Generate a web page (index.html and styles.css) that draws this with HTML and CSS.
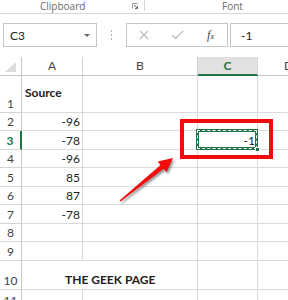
FILE: index.html
```html
<!DOCTYPE html>
<html lang="en">
  <head>
    <meta charset="UTF-8" />
    <title>Excel copy</title>
    <link rel="stylesheet" href="styles.css" />
  </head>
  <body>
    <div class="sheet">
      <div class="ribbon">
        <div class="group clip">
          <span class="label">Clipboard</span>
          <svg class="launcher" width="6" height="6" viewBox="0 0 6 6">
            <path d="M0.5 5.5V0.5H5.5" fill="none" stroke="#9a9a9a" stroke-width="1" />
            <path d="M2 2L5.5 5.5M3 5.5H5.5V3" fill="none" stroke="#6a6a6a" stroke-width="1" />
          </svg>
        </div>
        <div class="group font">
          <span class="label">Font</span>
        </div>
      </div>

      <div class="fbar">
        <div class="namebox">
          <span>C3</span>
          <span class="caret"></span>
        </div>
        <div class="grip"><i></i><i></i><i></i></div>
        <div class="fbtns">
          <svg width="10" height="10" viewBox="0 0 10 10" class="icon-x">
            <path d="M1 1L9 9M9 1L1 9" stroke="#bdbdbd" stroke-width="1.2" fill="none" />
          </svg>
          <svg width="13" height="10" viewBox="0 0 13 10" class="icon-check">
            <path d="M1 5L4.5 8.5L12 1" stroke="#bdbdbd" stroke-width="1.3" fill="none" />
          </svg>
          <span class="fx">f<small>x</small></span>
        </div>
        <div class="finput">-1</div>
      </div>

      <div class="grid">
        <div class="row head">
          <div class="cell rh corner"><span class="tri"></span></div>
          <div class="cell ch">A</div>
          <div class="cell ch">B</div>
          <div class="cell ch sel">C</div>
          <div class="cell ch">D</div>
        </div>
        <div class="row r1">
          <div class="cell rh">1</div>
          <div class="cell mid bold">Source</div>
          <div class="cell"></div>
          <div class="cell"></div>
          <div class="cell"></div>
        </div>
        <div class="row h18">
          <div class="cell rh">2</div>
          <div class="cell num">-96</div>
          <div class="cell"></div>
          <div class="cell"></div>
          <div class="cell"></div>
        </div>
        <div class="row h19">
          <div class="cell rh sel">3</div>
          <div class="cell num">-78</div>
          <div class="cell"></div>
          <div class="cell num active">-1<span class="handle"></span></div>
          <div class="cell"></div>
        </div>
        <div class="row h18">
          <div class="cell rh">4</div>
          <div class="cell num">-96</div>
          <div class="cell"></div>
          <div class="cell"></div>
          <div class="cell"></div>
        </div>
        <div class="row h19">
          <div class="cell rh">5</div>
          <div class="cell num">85</div>
          <div class="cell"></div>
          <div class="cell"></div>
          <div class="cell"></div>
        </div>
        <div class="row h18">
          <div class="cell rh">6</div>
          <div class="cell num">87</div>
          <div class="cell"></div>
          <div class="cell"></div>
          <div class="cell"></div>
        </div>
        <div class="row h19">
          <div class="cell rh">7</div>
          <div class="cell num">-78</div>
          <div class="cell"></div>
          <div class="cell"></div>
          <div class="cell"></div>
        </div>
        <div class="row h18">
          <div class="cell rh">8</div>
          <div class="cell"></div>
          <div class="cell"></div>
          <div class="cell"></div>
          <div class="cell"></div>
        </div>
        <div class="row h19">
          <div class="cell rh">9</div>
          <div class="cell"></div>
          <div class="cell"></div>
          <div class="cell"></div>
          <div class="cell"></div>
        </div>
        <div class="row r10">
          <div class="cell rh">10</div>
          <div class="cell span2 bold title">THE GEEK PAGE</div>
          <div class="cell"></div>
          <div class="cell"></div>
        </div>
        <div class="row r11">
          <div class="cell rh">11</div>
          <div class="cell"></div>
          <div class="cell"></div>
          <div class="cell"></div>
          <div class="cell"></div>
        </div>
      </div>

      <div class="callout"></div>
      <svg class="arrow" width="288" height="300" viewBox="0 0 288 300">
        <defs>
          <filter id="shadow" x="-20%" y="-20%" width="140%" height="140%">
            <feGaussianBlur stdDeviation="1.2" />
          </filter>
        </defs>
        <polygon
          points="119.5,200.5 160.5,164.9 157.7,161.4 173,158 166.5,172.2 163.7,168.7 120.5,201.5"
          fill="#555"
          opacity="0.6"
          filter="url(#shadow)"
          transform="translate(1.5 2)"
        />
        <polygon
          points="119.5,200.5 160.5,164.9 157.7,161.4 173,158 166.5,172.2 163.7,168.7 120.5,201.5"
          fill="#f20d0d"
        />
      </svg>
    </div>
  </body>
</html>
```

FILE: styles.css
```css
* {
  margin: 0;
  padding: 0;
  box-sizing: border-box;
}

body {
  background-color: #fff;
  overflow: hidden;
  font-family: Lato, "Liberation Sans", sans-serif;
  color: #222;
}

.sheet {
  position: relative;
  width: 288px;
  height: 300px;
  overflow: hidden;
}

/* ribbon labels */
.ribbon {
  display: flex;
  height: 14px;
  border-bottom: 1px solid #d6d6d6;
}

.group {
  position: relative;
  display: flex;
  align-items: flex-start;
}

.group .label {
  font-family: "Open Sans", sans-serif;
  font-size: 10px;
  line-height: 12px;
  color: #6b6b6b;
}

.clip {
  width: 145px;
  padding-left: 40px;
}

.clip::after {
  content: "";
  position: absolute;
  right: 0;
  top: 0;
  width: 1px;
  height: 11px;
  background-color: #d6d6d6;
}

.launcher {
  margin-left: 47px;
  margin-top: 3px;
}

.font {
  padding-left: 77px;
}

/* formula bar */
.fbar {
  display: flex;
  height: 24px;
  margin-top: 9px;
  padding-left: 3px;
  font-size: 12px;
}

.namebox {
  display: flex;
  align-items: center;
  justify-content: space-between;
  width: 94px;
  padding: 0 6px 0 6px;
  border: 1px solid #c6c6c6;
}

.caret {
  width: 0;
  height: 0;
  border-left: 3px solid transparent;
  border-right: 3px solid transparent;
  border-top: 3px solid #6b6b6b;
}

.grip {
  display: flex;
  flex-direction: column;
  align-items: center;
  justify-content: center;
  gap: 2px;
  width: 29px;
}

.grip i {
  width: 1px;
  height: 2px;
  background-color: #b0b0b0;
}

.fbtns {
  display: flex;
  align-items: center;
  width: 102px;
  border: 1px solid #c6c6c6;
  padding-left: 12px;
}

.icon-check {
  margin-left: 22px;
}

.fx {
  margin-left: 23px;
  font-family: "Liberation Serif", serif;
  font-style: italic;
  font-size: 12px;
  color: #444;
}

.fx small {
  font-size: 9px;
}

.finput {
  display: flex;
  align-items: center;
  flex: 1;
  margin-left: 2px;
  margin-right: -4px;
  padding-left: 10px;
  border: 1px solid #c6c6c6;
}

/* grid */
.grid {
  width: 320px;
  margin-top: 10px;
  font-size: 12px;
}

.row {
  display: grid;
  grid-template-columns: 22px 61px 115px 60px 62px;
}

.head {
  height: 19px;
}

.r1 {
  height: 37px;
}

.h18 {
  height: 18px;
}

.h19 {
  height: 19px;
}

.r10 {
  height: 29px;
}

.r11 {
  height: 20px;
}

.cell {
  position: relative;
  display: flex;
  align-items: flex-end;
  padding: 0 2px 1px 3px;
  line-height: 14px;
  border-right: 1px solid #dadada;
  border-bottom: 1px solid #dadada;
}

.rh {
  justify-content: center;
  padding: 0 0 1px 0;
  color: #444;
  border-right-color: #c6c6c6;
  border-bottom-color: #d4d4d4;
}

.rh.sel {
  color: #217346;
  font-weight: bold;
  border-right: 2px solid #217346;
}

.ch {
  align-items: center;
  justify-content: center;
  padding: 0;
  color: #444;
  border-right-color: #d4d4d4;
  border-bottom-color: #c6c6c6;
}

.ch.sel {
  background-color: #e1e1e1;
  color: #217346;
  font-weight: bold;
  border-bottom: 2px solid #217346;
}

.corner {
  border-bottom-color: #c6c6c6;
}

.tri {
  position: absolute;
  left: 5px;
  top: 5px;
  width: 0;
  height: 0;
  border-left: 11px solid transparent;
  border-bottom: 10px solid #dcdcdc;
}

.bold {
  font-weight: bold;
}

.mid {
  align-items: center;
  padding-bottom: 2px;
}

.num {
  justify-content: flex-end;
}

.span2 {
  grid-column: span 2;
}

.title {
  padding-left: 43px;
  padding-bottom: 2px;
}

/* copied cell with marching ants */
.active::after {
  content: "";
  position: absolute;
  left: -2px;
  top: -2px;
  right: -1px;
  bottom: -1px;
  border: 3px solid #217346;
}

.active::before {
  content: "";
  position: absolute;
  left: -1px;
  top: -1px;
  right: 0;
  bottom: 0;
  border: 1px dashed #fff;
  z-index: 1;
}

.handle {
  position: absolute;
  right: -3px;
  bottom: -3px;
  width: 5px;
  height: 5px;
  background-color: #217346;
  border: 1px solid #fff;
  z-index: 2;
}

/* annotations drawn over the sheet */
.callout {
  position: absolute;
  left: 180px;
  top: 119px;
  width: 93px;
  height: 40px;
  border: 4px solid #f20d0d;
}

.arrow {
  position: absolute;
  left: 0;
  top: 0;
  pointer-events: none;
}
```
